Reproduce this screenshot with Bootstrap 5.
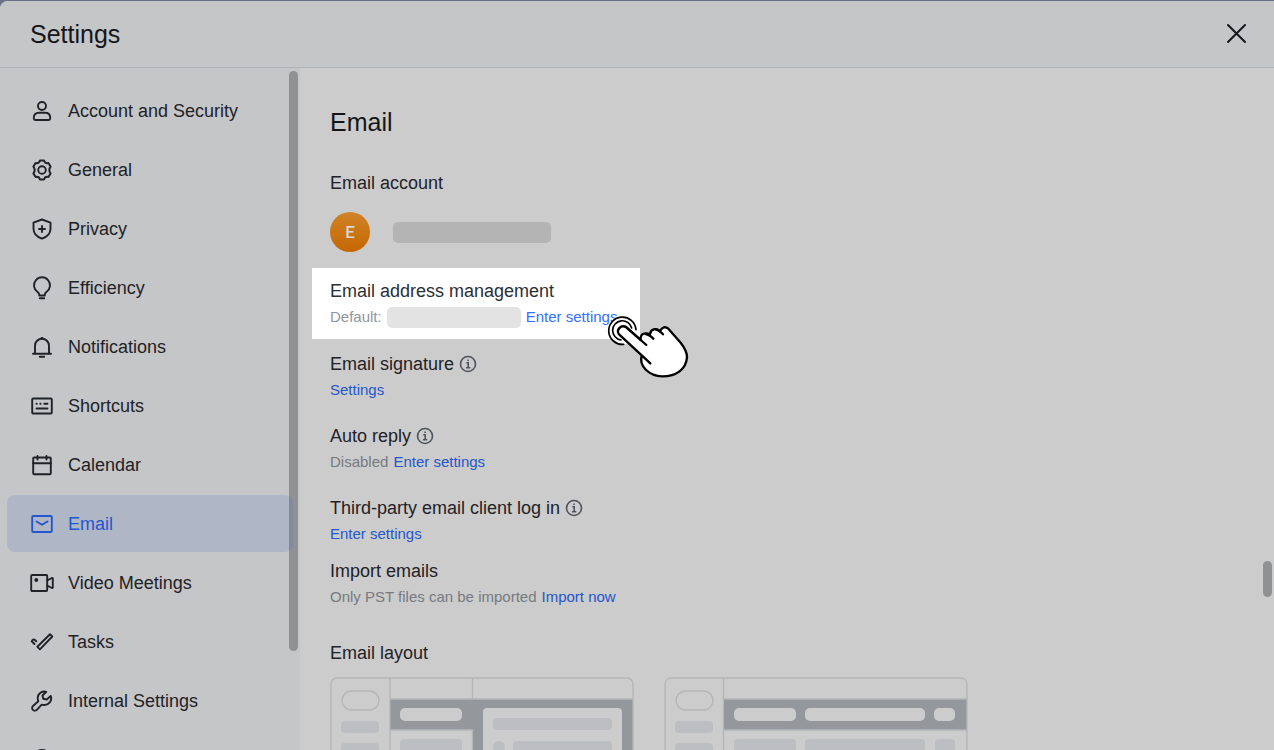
<!DOCTYPE html>
<html lang="en">
<head>
<meta charset="utf-8">
<meta name="viewport" content="width=device-width, initial-scale=1">
<title>Settings</title>
<link href="https://cdn.jsdelivr.net/npm/bootstrap@5.3.0/dist/css/bootstrap.min.css" rel="stylesheet">
<style>
  body { font-family: "Liberation Sans", Arial, sans-serif; font-size: 18px; line-height: 26px; color: #1f2227; background: #6a7188; padding-top: 1px; }
  a { color: #2456cf; text-decoration: none; }
  svg { flex: none; }
  .window { background: #ccc; border-top-left-radius: 8px; }
  .titlebar { background: #c5c6c8; height: 67px; border-bottom: 1px solid #b0b2b6; padding: 0 25px 0 30px; }
  .page-title { font-size: 25px; line-height: 32px; font-weight: 400; color: #14161a; }
  .close-btn { width: 26px; height: 26px; color: #14161a; }
  .side { width: 300px; background: #c5c6c8; padding: 14px 7px 0; z-index: 0; }
  .side .nav { row-gap: 2px; }
  .side .nav-link { height: 57px; padding: 0 23px; gap: 14px; color: #1f2227; border-radius: 8px; }
  .side .nav-link.active { background: rgba(57, 98, 187, .15); color: #2456cf; }
  .line-icon { width: 24px; height: 24px; fill: none; stroke: currentColor; stroke-width: 1.9; stroke-linecap: round; stroke-linejoin: round; }
  .thumb { background: #8f9193; width: 9px; border-radius: 5px; }
  .side-thumb { top: 3px; right: 2px; height: 85%; z-index: -1; }
  .main-thumb { bottom: 153px; right: 2px; height: 36px; }
  .content { padding: 38px 30px 0; }
  .content h3 { font-size: 18px; line-height: 26px; font-weight: 400; margin: 0; column-gap: 5px; }
  .sub { font-size: 15px; line-height: 26px; color: #777a80; gap: 5px; }
  .account { margin-top: 32px; }
  .account > div { gap: 23px; }
  .avatar { width: 40px; height: 40px; color: #ddd8d0; font: 500 17px/40px Roboto, sans-serif; background: linear-gradient(#d08328, #c46700); }
  .redacted { height: 21px; border-radius: 5px; background: #b4b4b4; width: 158px; }
  .spotlight { width: 328px; margin: 16px 0 12px -18px; padding: 10px 18px 9px; background: #fff; color: #2b2f36; }
  .spotlight .redacted { width: 134px; background: #e3e3e3; }
  .spotlight .sub { color: #8f959e; }
  .spotlight a { color: #3370ff; }
  .pointer { right: -49px; bottom: -40px; width: 82px; height: 64px; }
  .setting-group { margin-bottom: 20px; }
  .setting-group.tight { margin-bottom: 11px; }
  .info-icon { width: 18px; height: 18px; fill: none; stroke: #4f535b; stroke-width: 1.6; }
  .layout-choice { margin-top: 30px; }
  .layouts { gap: 30px; margin-top: 11px; }
  .layouts svg { width: 304px; height: 190px; }
  .frame { fill: none; stroke: #b3b5b8; stroke-width: 1.3; }
  .band { fill: #94979c; }
  .paper { fill: #ccc; }
  .ghost { fill: #bcbec1; }
</style>
</head>
<body class="vh-100 overflow-hidden">
<div class="window h-100 d-flex flex-column overflow-hidden">
  <header class="titlebar d-flex align-items-center justify-content-between flex-shrink-0">
    <h1 class="page-title m-0">Settings</h1>
    <button type="button" class="close-btn btn p-0 border-0 d-flex" aria-label="Close">
      <svg width="26" height="26" viewBox="0 0 26 26" fill="none" stroke="currentColor" stroke-width="2" stroke-linecap="round"><path d="M5 4l17 17M22 4L5 21"/></svg>
    </button>
  </header>
  <div class="d-flex flex-grow-1 overflow-hidden position-relative">
    <nav class="side position-relative flex-shrink-0 overflow-hidden" aria-label="Settings sections">
      <div class="nav flex-column flex-nowrap">
        <a class="nav-link d-flex align-items-center" href="#"><svg class="line-icon" viewBox="0 0 24 24"><circle cx="12" cy="7" r="4"/><path d="M9 13.800h6c3.200 0 5.200 1.700 5.200 4.900v.8c0 .9-.6 1.500-1.500 1.500H5.300c-.9 0-1.500-.6-1.500-1.500v-.8c0-3.200 2-4.900 5.200-4.900z"/></svg>Account and Security</a>
        <a class="nav-link d-flex align-items-center" href="#"><svg class="line-icon" viewBox="0 0 24 24"><circle cx="12" cy="12" r="3.800"/><path d="M10 2.500h4Q15 5.800 18.400 5L20.600 8.600Q18 12 20.600 15.400L18.400 19Q15 18.200 14 21.500H10Q9 18.200 5.600 19L3.400 15.400Q6 12 3.400 8.600L5.600 5Q9 5.800 10 2.500z" stroke-width="2"/></svg>General</a>
        <a class="nav-link d-flex align-items-center" href="#"><svg class="line-icon" viewBox="0 0 24 24"><path d="M12 2.500l8.500 3.200v6c0 5-3.700 8.200-8.500 10-4.800-1.800-8.500-5-8.500-10v-6zM12 9v6M9 12h6"/></svg>Privacy</a>
        <a class="nav-link d-flex align-items-center" href="#"><svg class="line-icon" viewBox="0 0 24 24"><path d="M9.200 19.500v-1.200c0-1-.7-1.500-1.600-2.300A8 8 0 1 1 16.400 16c-.9.8-1.600 1.300-1.600 2.300v1.200zM9.800 22.300h4.400"/></svg>Efficiency</a>
        <a class="nav-link d-flex align-items-center" href="#"><svg class="line-icon" viewBox="0 0 24 24"><path d="M3 18.800h18M5 18.500v-7.800a7 7 0 0 1 14 0v7.800M11.500 3h1M9.800 21.800h4.400"/></svg>Notifications</a>
        <a class="nav-link d-flex align-items-center" href="#"><svg class="line-icon" viewBox="0 0 24 24"><rect x="2.200" y="4.500" width="19.600" height="15" rx="1"/><path d="M6.500 9.700h.3M10.300 9.700h.3M14.300 9.700h3.200M6.500 14.500h11"/></svg>Shortcuts</a>
        <a class="nav-link d-flex align-items-center" href="#"><svg class="line-icon" viewBox="0 0 24 24"><rect x="3.200" y="4.500" width="17.600" height="16.800" rx="1"/><path d="M3.200 10.200h17.600M7.500 3v3.500M16.500 3v3.500"/></svg>Calendar</a>
        <a class="nav-link active d-flex align-items-center" aria-current="page" href="#"><svg class="line-icon" viewBox="0 0 24 24"><rect x="2.200" y="4" width="19.600" height="16" rx="1"/><path d="M6.500 9.500l5.500 3.300 5.500-3.300"/></svg>Email</a>
        <a class="nav-link d-flex align-items-center" href="#"><svg class="line-icon" viewBox="0 0 24 24"><rect x="1.200" y="4" width="16" height="16" rx="1"/><path d="M17.200 9.300l4.700-2.300c.5-.2.900 0 .9.500v9c0 .5-.4.700-.9.500l-4.700-2.300"/><circle cx="6.300" cy="9" r="1" fill="currentColor"/></svg>Video Meetings</a>
        <a class="nav-link d-flex align-items-center" href="#"><svg class="line-icon" viewBox="0 0 24 24"><path d="M20 4.200l2.300 2.300L9.900 19.300l-2.600-2.600zM4.500 14L1.700 11.300q1.300-2.600 3.300-1.300l1.300 1.300"/></svg>Tasks</a>
        <a class="nav-link d-flex align-items-center" href="#"><svg class="line-icon" viewBox="0 0 24 24"><path d="M16.300 2.800c-4-1.200-8.600 1.600-8.600 6.200 0 1.300.2 2.100.6 3.200L3 17c-1.200 1.100-1.200 2.900-.1 3.900 1.100 1.100 2.900 1 3.900-.1l4.900-5.200c4.900 1.600 9.500-1.700 9.500-6.300 0-1-.2-1.700-.5-2.400l-3.900 3.600-3.600-.8-.7-3.200z"/></svg>Internal Settings</a>
        <a class="nav-link d-flex align-items-center" href="#" aria-label="More"><svg class="line-icon" viewBox="0 0 24 24"><circle cx="12" cy="12" r="10"/></svg></a>
      </div>
      <div class="thumb side-thumb position-absolute"></div>
    </nav>
    <main class="content flex-grow-1">
      <h2 class="page-title m-0">Email</h2>
      <section class="account">
        <h3>Email account</h3>
        <div class="d-flex align-items-center mt-3">
          <span class="avatar rounded-circle text-center">E</span>
          <span class="redacted"></span>
        </div>
      </section>
      <section class="spotlight position-relative">
        <h3>Email address management</h3>
        <div class="sub d-flex align-items-center"><span>Default:</span><span class="redacted"></span><a href="#">Enter settings</a></div>
        <svg class="pointer position-absolute" viewBox="24 30 246 192" fill="#fff" stroke="#000" stroke-width="7" stroke-linecap="round" stroke-linejoin="round" aria-hidden="true">
          <circle cx="71" cy="77" r="42" stroke="none"/>
          <g fill="none" stroke-width="5"><path d="M74 118A41 41 0 1 1 111 74"/><path d="M66 105A29 29 0 1 1 98 69"/></g>
          <path d="M154 175L61 89C49 76 66 57 82 67L125 105C123 84 140 82 153 88C155 71 171 68 183 78C190 65 199 64 208 71L245 113C258 130 265 143 264 157C261 193 232 214 190 214C150 213 119 183 128 151"/>
          <path d="M80 65L142 120M140 87Q150 88 163 101M170 73Q180 75 192 88" fill="none"/>
        </svg>
      </section>
      <section class="setting-group">
        <h3 class="d-flex align-items-center">Email signature <svg class="info-icon" viewBox="0 0 18 18"><circle cx="9" cy="9" r="7.500"/><path d="M7.300 7.800H9.200V12.500M7 12.700h4.300M8.300 5.200h1.600"/></svg></h3>
        <div class="sub"><a href="#">Settings</a></div>
      </section>
      <section class="setting-group">
        <h3 class="d-flex align-items-center">Auto reply <svg class="info-icon" viewBox="0 0 18 18"><circle cx="9" cy="9" r="7.500"/><path d="M7.300 7.800H9.200V12.500M7 12.700h4.300M8.300 5.200h1.600"/></svg></h3>
        <div class="sub d-flex">Disabled <a href="#">Enter settings</a></div>
      </section>
      <section class="setting-group tight">
        <h3 class="d-flex align-items-center">Third-party email client log in <svg class="info-icon" viewBox="0 0 18 18"><circle cx="9" cy="9" r="7.500"/><path d="M7.300 7.800H9.200V12.500M7 12.700h4.300M8.300 5.200h1.600"/></svg></h3>
        <div class="sub"><a href="#">Enter settings</a></div>
      </section>
      <section>
        <h3>Import emails</h3>
        <div class="sub d-flex">Only PST files can be imported <a href="#">Import now</a></div>
      </section>
      <section class="layout-choice">
        <h3>Email layout</h3>
        <div class="layouts d-flex">
          <svg viewBox="0 0 304 190" role="img" aria-label="Three-column layout">
            <path class="band" d="M60 22H303V189H142V53H60z"/>
            <rect class="frame" x="1" y="1" width="302" height="188" rx="6"/>
            <path class="frame" d="M60 1V189M142.500 1V22M60 22H303M60 53H142.500V189"/>
            <rect class="frame" x="12" y="14" width="37" height="19" rx="9.500"/>
            <g class="paper"><rect x="70" y="31" width="62" height="13" rx="5"/><rect x="153" y="31" width="139" height="158" rx="4"/></g>
            <g class="ghost"><rect x="11" y="44" width="38" height="12" rx="4"/><rect x="11" y="66" width="38" height="12" rx="4"/><rect x="70" y="62" width="62" height="13" rx="4"/><rect x="163" y="41" width="119" height="12" rx="4"/><circle cx="169" cy="70" r="6"/><rect x="183" y="64" width="99" height="12" rx="4"/></g>
          </svg>
          <svg viewBox="0 0 304 190" role="img" aria-label="Two-column layout">
            <path class="band" d="M60 22H303V53H60z"/>
            <rect class="frame" x="1" y="1" width="302" height="188" rx="6"/>
            <path class="frame" d="M59.500 1V189M60 22H303M60 53H303"/>
            <rect class="frame" x="12" y="14" width="37" height="19" rx="9.500"/>
            <g class="paper"><rect x="70" y="31" width="62" height="13" rx="5"/><rect x="141" y="31" width="120" height="13" rx="5"/><rect x="270" y="31" width="21" height="13" rx="5"/></g>
            <g class="ghost"><rect x="11" y="44" width="38" height="12" rx="4"/><rect x="11" y="66" width="38" height="12" rx="4"/><rect x="70" y="62" width="62" height="13" rx="4"/><rect x="141" y="62" width="120" height="13" rx="4"/><rect x="271" y="62" width="20" height="13" rx="4"/></g>
          </svg>
        </div>
      </section>
    </main>
    <div class="thumb main-thumb position-absolute"></div>
  </div>
</div>
<script src="https://cdn.jsdelivr.net/npm/bootstrap@5.3.0/dist/js/bootstrap.bundle.min.js"></script>
</body>
</html>
